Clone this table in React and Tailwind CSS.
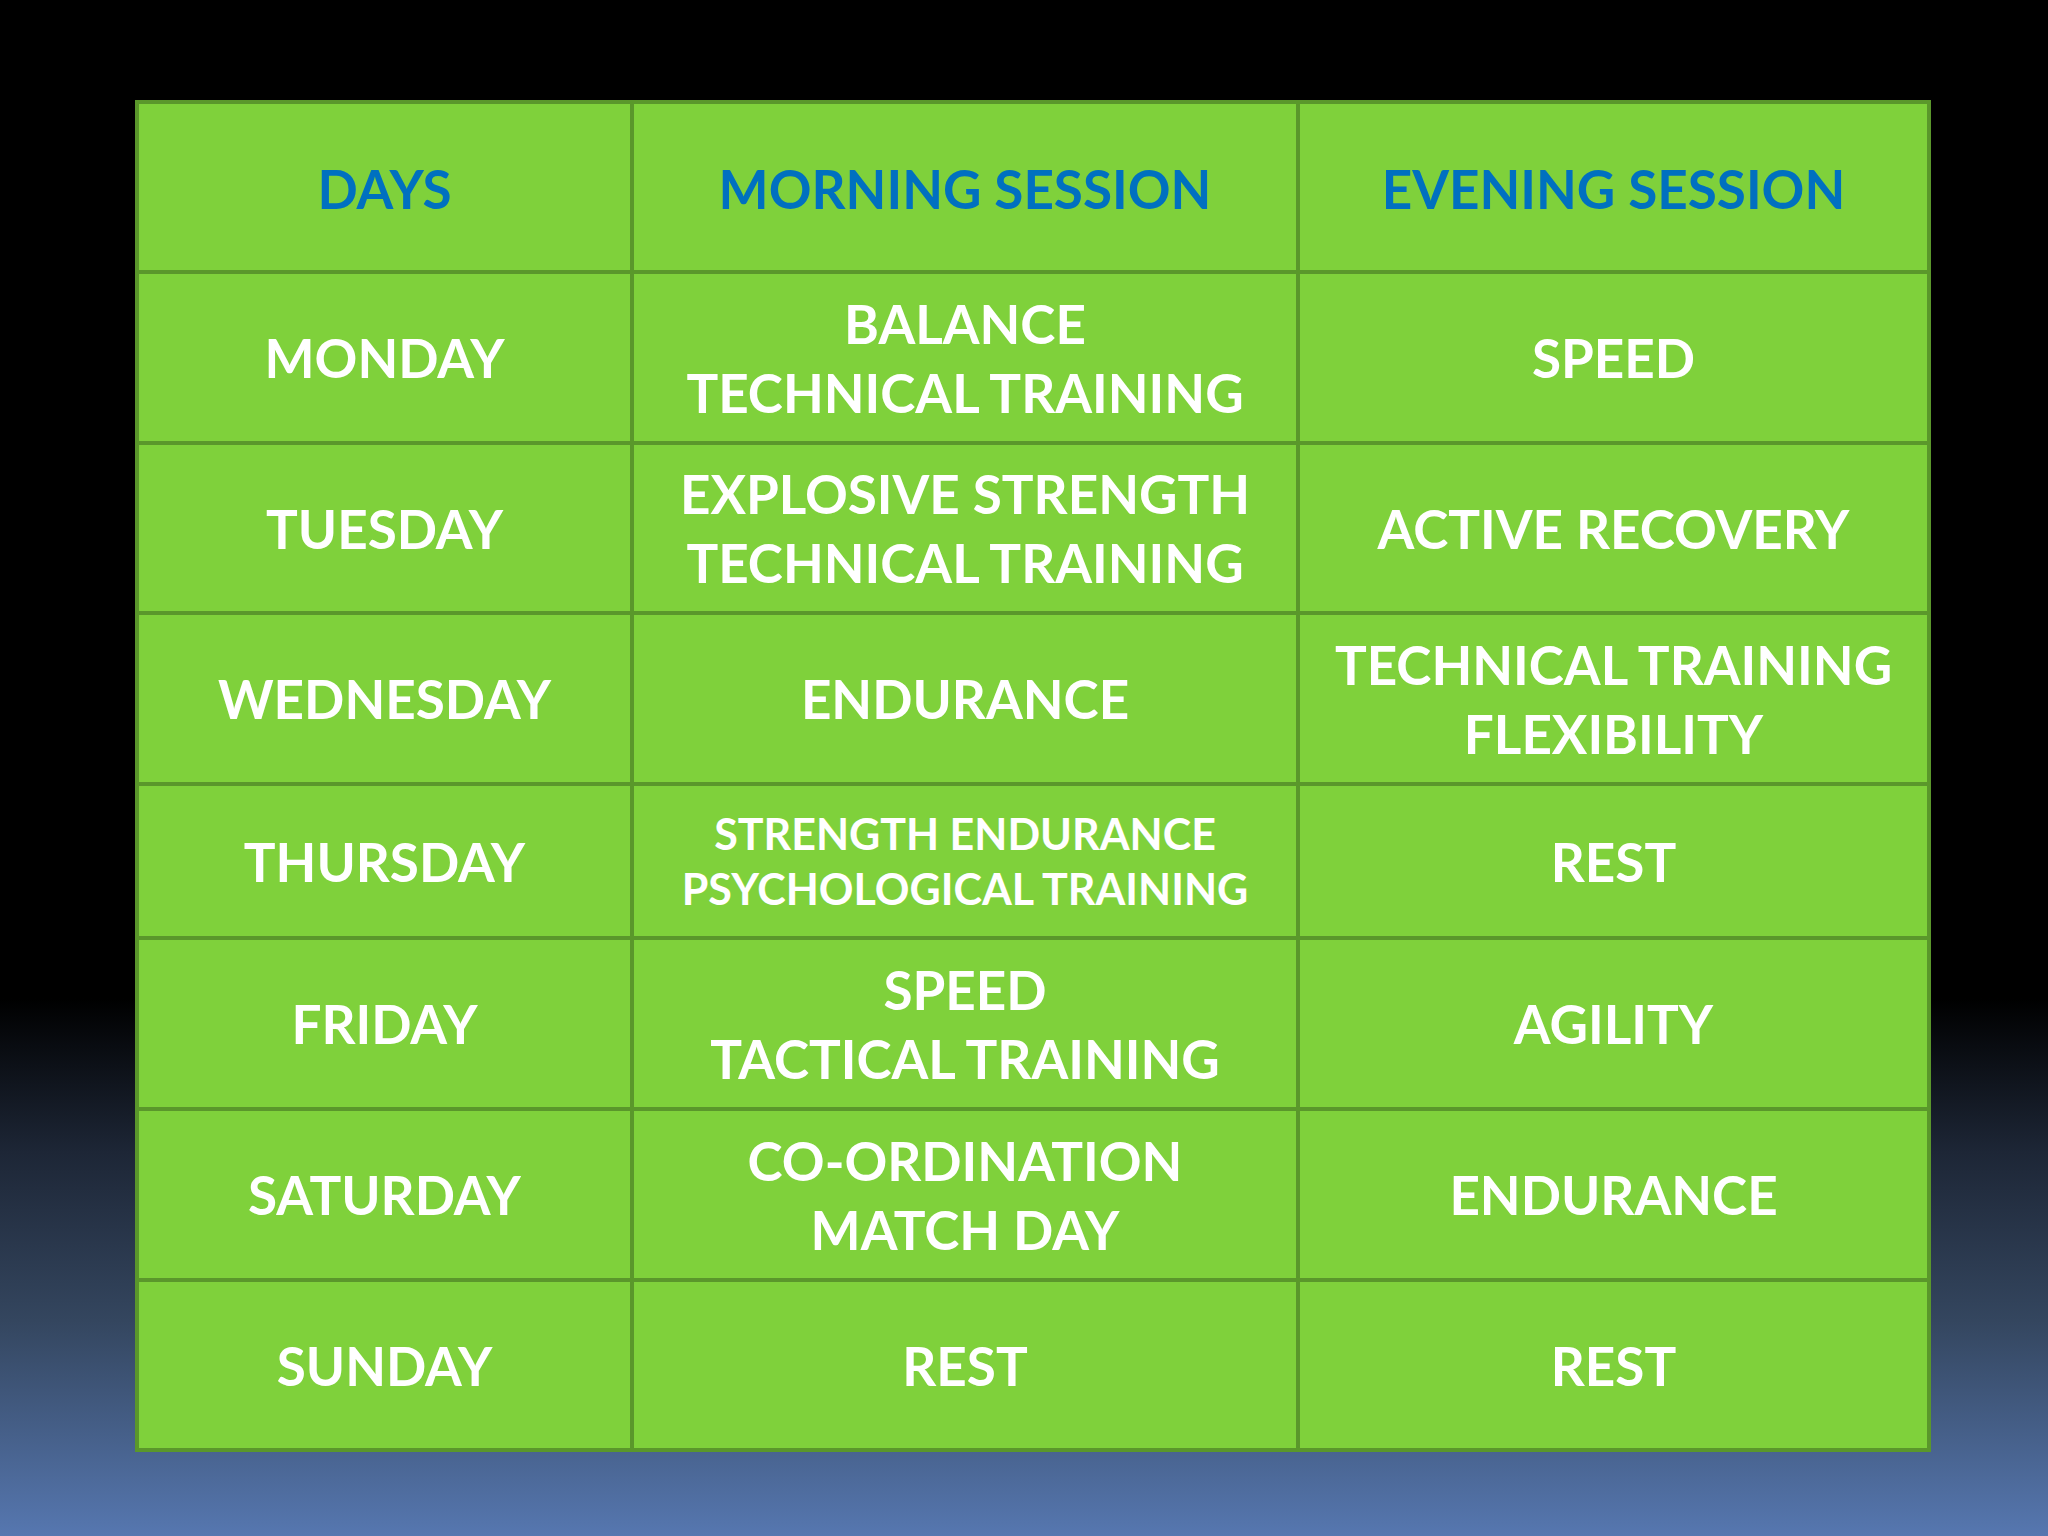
import React from "react";

const rows = [
  { day: "MONDAY", morning: ["BALANCE", "TECHNICAL TRAINING"], evening: ["SPEED"], h: "h-[167px]" },
  { day: "TUESDAY", morning: ["EXPLOSIVE STRENGTH", "TECHNICAL TRAINING"], evening: ["ACTIVE RECOVERY"], h: "h-[166px]" },
  { day: "WEDNESDAY", morning: ["ENDURANCE"], evening: ["TECHNICAL TRAINING", "FLEXIBILITY"], h: "h-[167px]" },
  { day: "THURSDAY", morning: ["STRENGTH ENDURANCE", "PSYCHOLOGICAL TRAINING"], evening: ["REST"], h: "h-[150px]", small: true },
  { day: "FRIDAY", morning: ["SPEED", "TACTICAL TRAINING"], evening: ["AGILITY"], h: "h-[167px]" },
  { day: "SATURDAY", morning: ["CO-ORDINATION", "MATCH DAY"], evening: ["ENDURANCE"], h: "h-[167px]" },
  { day: "SUNDAY", morning: ["REST"], evening: ["REST"], h: "h-[166px]" },
];

const Cell = ({ lines, h, small, head }) => (
  <div
    className={`${h} bg-[#7fd13b] flex flex-col items-center justify-center text-center font-bold ${
      head ? "text-[#0070c0] pt-[3px]" : "text-white"
    } ${small ? "text-[43px] leading-[55px]" : "text-[53px] leading-[69px]"}`}
  >
    {lines.map((l, i) => (
      <div key={i} className="whitespace-nowrap">{l}</div>
    ))}
  </div>
);

export default function App() {
  return (
    <div
      className="w-[2048px] h-[1536px] overflow-hidden pt-[100px] pl-[135px] bg-[linear-gradient(to_bottom,#000_0%,#000_65%,#1d2636_75%,#34465f_86%,#5677b0_100%)]"
      style={{ fontFamily: "Lato, 'Open Sans', sans-serif" }}
    >
      <div className="inline-grid grid-cols-[491px_662px_627px] gap-[4px] p-[4px] bg-[#5a972b]">
        <Cell head h="h-[166px]" lines={["DAYS"]} />
        <Cell head h="h-[166px]" lines={["MORNING SESSION"]} />
        <Cell head h="h-[166px]" lines={["EVENING SESSION"]} />
        {rows.map((r) => (
          <React.Fragment key={r.day}>
            <Cell h={r.h} lines={[r.day]} />
            <Cell h={r.h} lines={r.morning} small={r.small} />
            <Cell h={r.h} lines={r.evening} />
          </React.Fragment>
        ))}
      </div>
    </div>
  );
}
